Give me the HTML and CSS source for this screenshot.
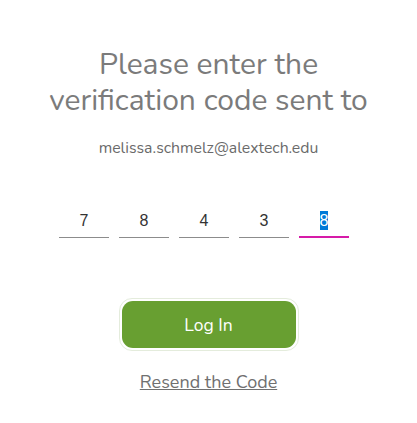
FILE: index.html
```html
<!DOCTYPE html>
<html>
<head>
<meta charset="utf-8">
<link rel="stylesheet" href="styles.css">
</head>
<body>
<main class="page">
  <h1 class="title">Please enter the<br>verification code sent to</h1>
  <p class="email">melissa.schmelz@alextech.edu</p>
  <div class="code">
    <div class="digit">7</div>
    <div class="digit">8</div>
    <div class="digit">4</div>
    <div class="digit">3</div>
    <div class="digit active"><span class="sel">8</span></div>
  </div>
  <div class="btn-wrap"><button class="login">Log In</button></div>
  <a class="resend" href="#">Resend the Code</a>
</main>
</body>
</html>
```
FILE: styles.css
```css
html, body {
  margin: 0;
  padding: 0;
  background: #fff;
}
.page {
  display: flex;
  flex-direction: column;
  align-items: center;
  padding-top: 47px;
  font-family: "Nunito", "Lato", "Open Sans", sans-serif;
}
.title {
  margin: 0;
  font-size: 30px;
  font-weight: 400;
  line-height: 36px;
  color: #7b7b7b;
  text-align: center;
}
.email {
  margin: 19px 0 0;
  font-size: 15.8px;
  line-height: 20px;
  color: #6a6a6a;
}
.code {
  display: flex;
  gap: 10px;
  margin-top: 52px;
  margin-left: -9px;
}
.digit {
  width: 50px;
  height: 27px;
  border-bottom: 1px solid #8c8c8c;
  font-family: "Liberation Sans", Arial, sans-serif;
  font-size: 16px;
  line-height: 22px;
  color: #333;
  text-align: center;
}
.digit.active {
  height: 26px;
  border-bottom: 2px solid #d61aa8;
}
.sel {
  background: #0078d7;
  color: #fff;
  display: inline-block;
  line-height: 19px;
  margin-top: 1px;
}
.btn-wrap {
  margin-top: 60px;
  padding: 2px;
  border-radius: 13px;
  border: 1px solid #e4ecdc;
}
.login {
  display: block;
  width: 174px;
  height: 47px;
  border: none;
  border-radius: 11px;
  background: #689f31;
  color: #fff;
  font-family: "Nunito", "Lato", "Open Sans", sans-serif;
  font-size: 17.5px;
}
.resend {
  margin-top: 19px;
  font-size: 18px;
  color: #707070;
  text-decoration: underline;
}
```
